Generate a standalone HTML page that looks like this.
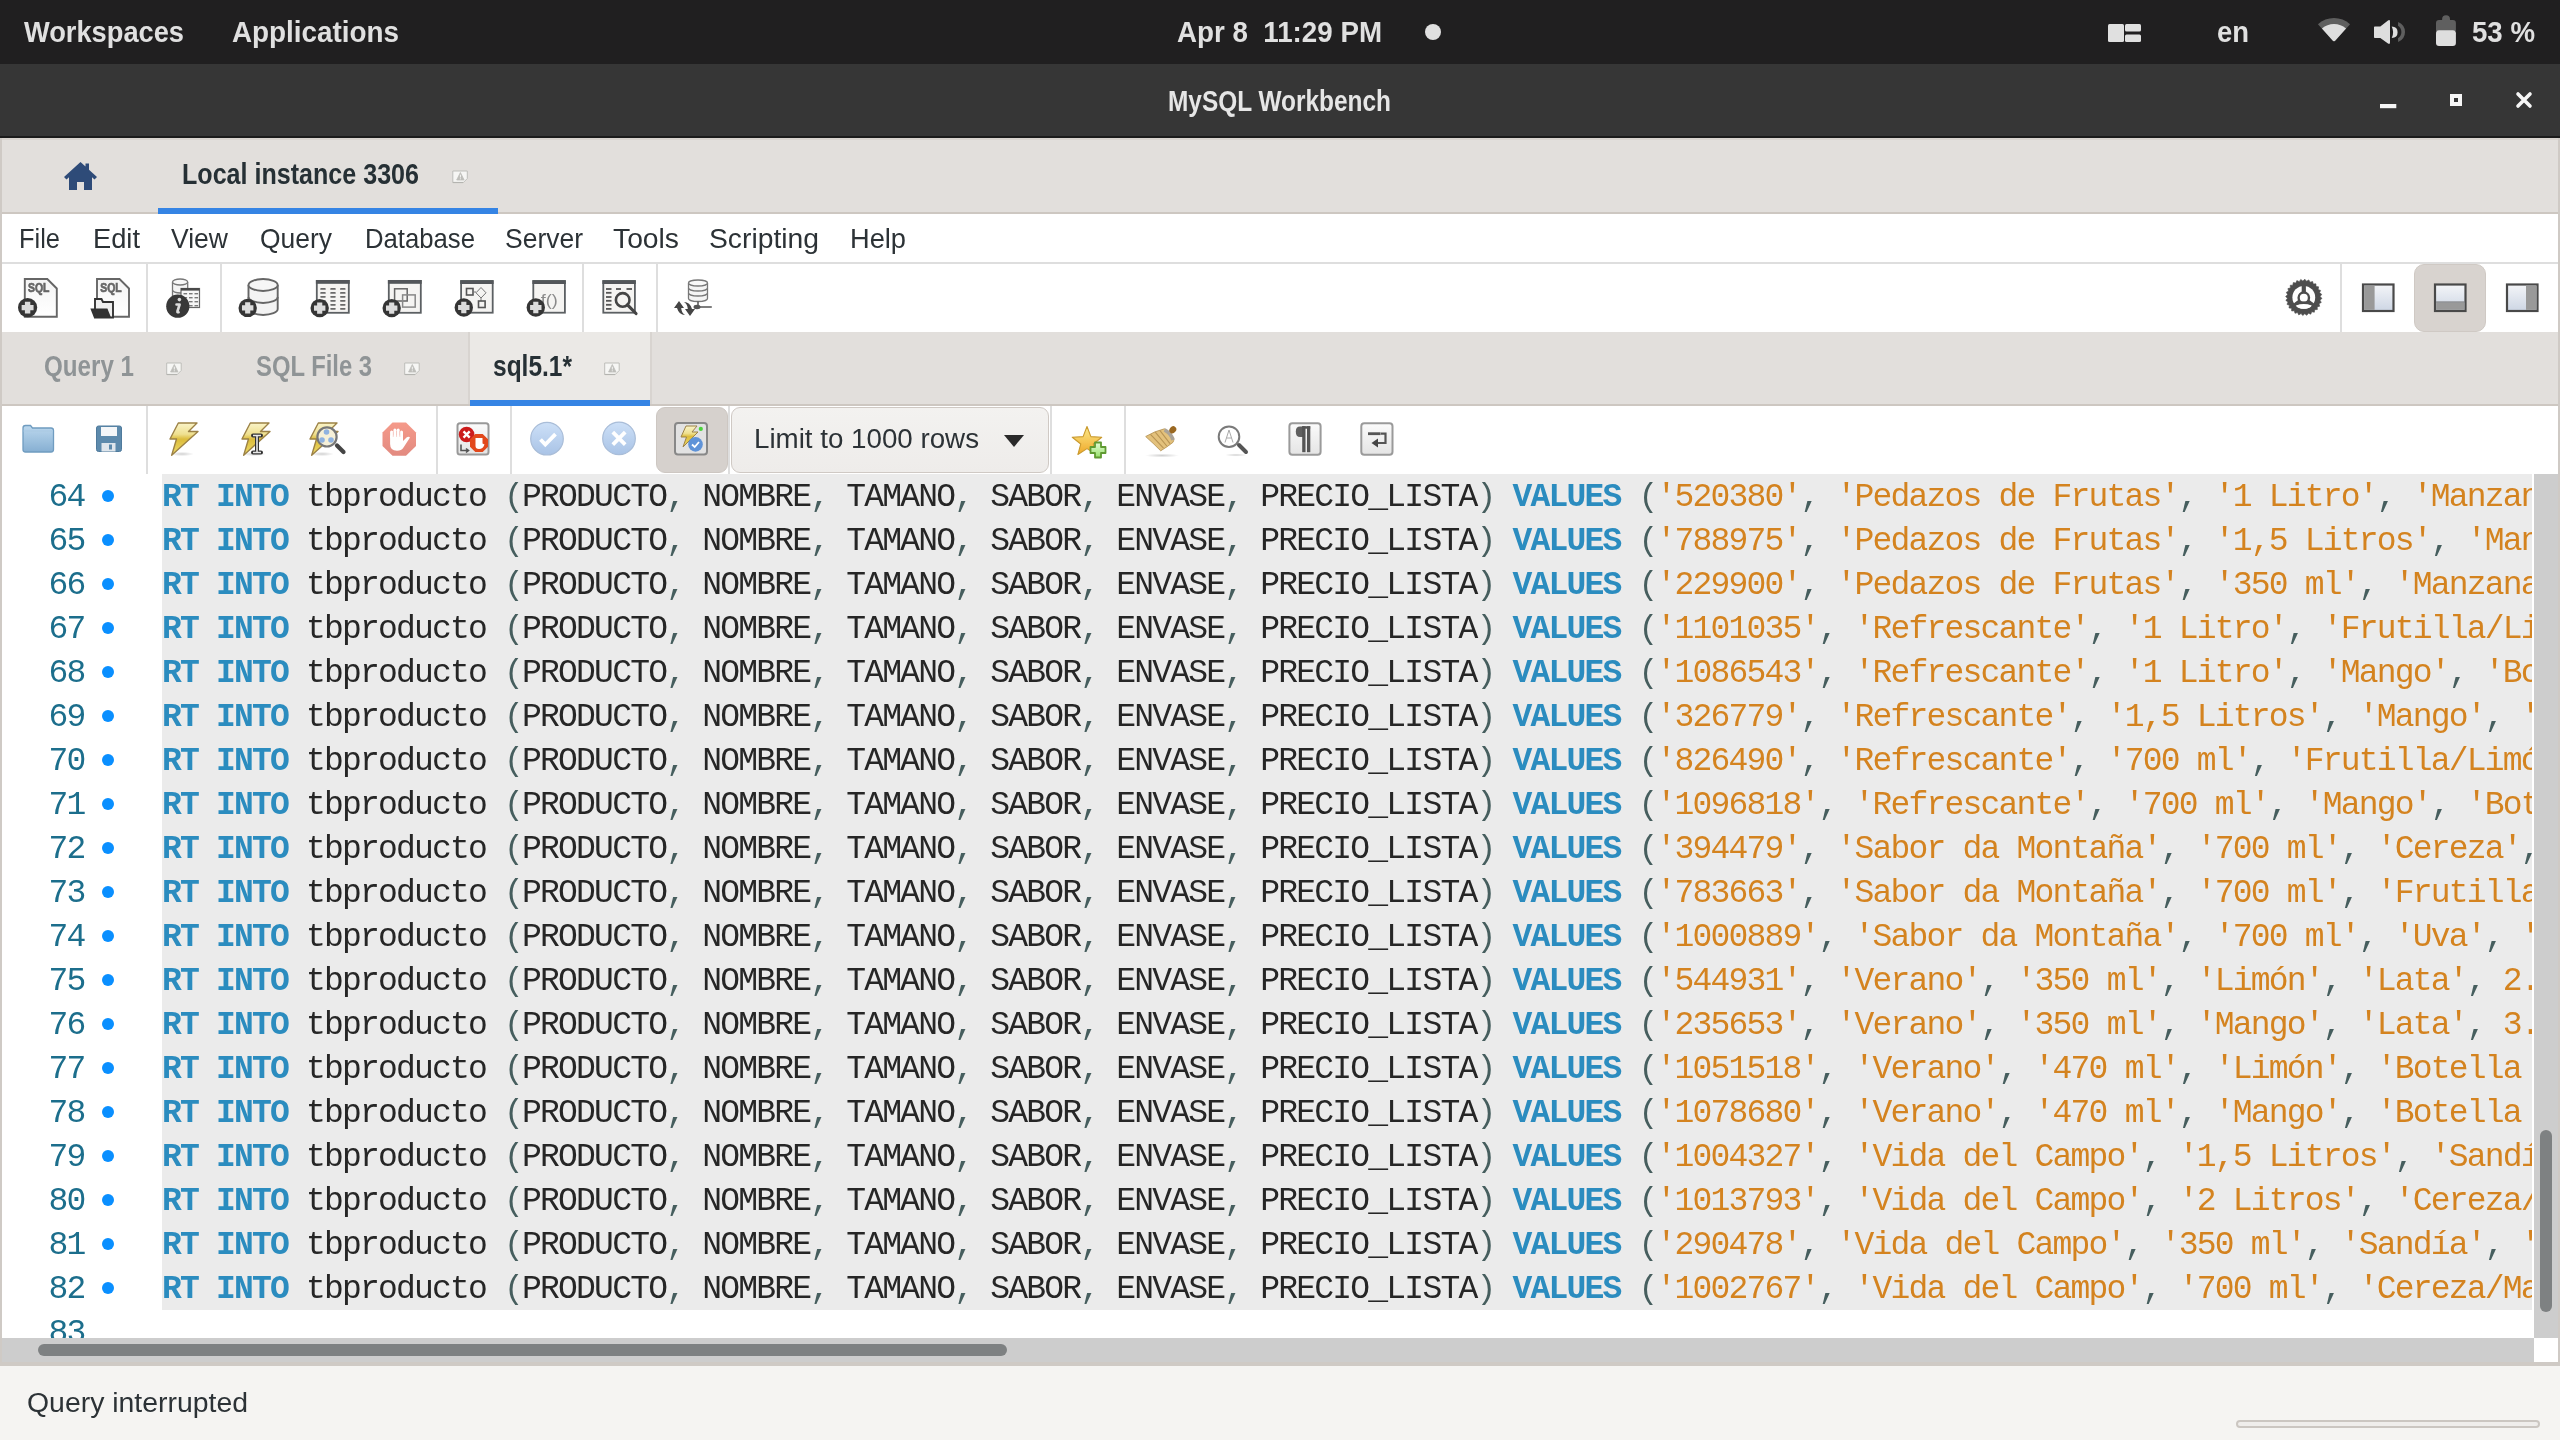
<!DOCTYPE html><html><head><meta charset="utf-8"><style>
*{margin:0;padding:0;box-sizing:border-box}
html,body{width:2560px;height:1440px;overflow:hidden;background:#201f20;font-family:"Liberation Sans",sans-serif}
.a{position:absolute}
#txt{position:absolute;left:0;top:0;width:2560px;height:1440px;pointer-events:none;will-change:transform}
#txt text{font-family:"Liberation Sans",sans-serif}
.code{position:absolute;left:162px;top:474px;width:2370px;height:864px;overflow:hidden}
.ci{position:absolute;left:0;top:2px;width:2370px;height:900px;will-change:transform}
.ln{position:absolute;left:0;height:44px;white-space:pre;font-family:"Liberation Mono",monospace;font-size:33px;letter-spacing:-1.8px;line-height:44px;color:#262626}
.k{color:#2b8cbf;font-weight:bold}
.p{color:#465e5e}
.s{color:#d4831f}
.gut{position:absolute;left:2px;top:474px;width:160px;height:864px;overflow:hidden;background:#fff;will-change:transform}
.num{position:absolute;left:0;margin-top:2px;width:82.5px;text-align:right;white-space:pre;font-family:"Liberation Mono",monospace;font-size:33px;letter-spacing:-1.8px;line-height:44px;color:#1c6e8c}
.dot{position:absolute;left:100px;width:12px;height:12px;border-radius:50%;background:#0a8fff}
.sep{position:absolute;width:2px;background:#dedede}
</style></head><body><div class="a" style="left:0;top:64px;width:2560px;height:72px;background:#363636"></div><div class="a" style="left:0;top:136px;width:2560px;height:2px;background:#1b1b1b"></div><div class="a" style="left:0;top:138px;width:2560px;height:1302px;background:#cfcac5"></div><div class="a" style="left:2px;top:140px;width:2556px;height:72px;background:#e2dfdc"></div><div class="a" style="left:2px;top:138px;width:2556px;height:2px;background:#d9d4cf"></div><div class="a" style="left:2px;top:212px;width:2556px;height:2px;background:#cdc7c1"></div><div class="a" style="left:158px;top:208px;width:340px;height:6px;background:#3584e4"></div><div class="a" style="left:2px;top:214px;width:2556px;height:48px;background:#fff"></div><div class="a" style="left:2px;top:262px;width:2556px;height:2px;background:#dedede"></div><div class="a" style="left:2px;top:264px;width:2556px;height:68px;background:#fff"></div><div class="sep" style="left:146px;top:264px;height:68px"></div><div class="sep" style="left:220px;top:264px;height:68px"></div><div class="sep" style="left:582px;top:264px;height:68px"></div><div class="sep" style="left:656px;top:264px;height:68px"></div><div class="sep" style="left:2340px;top:264px;height:68px"></div><div class="a" style="left:2414px;top:264px;width:72px;height:68px;border-radius:10px;background:#d8d3cf;border:1px solid #cfc9c4"></div><div class="a" style="left:2px;top:332px;width:2556px;height:74px;background:#e2dfdc"></div><div class="a" style="left:2px;top:404px;width:2556px;height:2px;background:#cdc7c1"></div><div class="a" style="left:468px;top:332px;width:2px;height:72px;background:#d8d4d0"></div><div class="a" style="left:470px;top:332px;width:180px;height:74px;background:#ebe9e6"></div><div class="a" style="left:650px;top:332px;width:2px;height:72px;background:#d8d4d0"></div><div class="a" style="left:470px;top:400px;width:180px;height:6px;background:#3584e4"></div><div class="a" style="left:2px;top:406px;width:2556px;height:68px;background:#fff"></div><div class="sep" style="left:146px;top:406px;height:68px"></div><div class="sep" style="left:436px;top:406px;height:68px"></div><div class="sep" style="left:510px;top:406px;height:68px"></div><div class="sep" style="left:728px;top:406px;height:68px"></div><div class="sep" style="left:1050px;top:406px;height:68px"></div><div class="sep" style="left:1124px;top:406px;height:68px"></div><div class="a" style="left:656px;top:407px;width:72px;height:66px;border-radius:9px;background:#d6d1cd;border:1px solid #cdc7c2"></div><div class="a" style="left:731px;top:407px;width:318px;height:66px;border-radius:9px;background:linear-gradient(#f3f2f0,#eeecea);border:1.5px solid #cfc9c4"></div><div class="a" style="left:1004px;top:435px;width:0;height:0;border-left:10px solid transparent;border-right:10px solid transparent;border-top:12px solid #2a2a2a"></div><div class="a" style="left:2px;top:474px;width:2532px;height:864px;background:#fff"></div><div class="a" style="left:162px;top:474px;width:2370px;height:836px;background:#ebebeb"></div><div class="a" style="left:2534px;top:474px;width:24px;height:864px;background:#cdcdcd"></div><div class="a" style="left:2540px;top:1130px;width:12px;height:182px;border-radius:6px;background:#7e8182"></div><div class="a" style="left:2px;top:1338px;width:2532px;height:24px;background:#cdcdcd"></div><div class="a" style="left:38px;top:1344px;width:969px;height:12px;border-radius:6px;background:#7e8182"></div><div class="a" style="left:2534px;top:1338px;width:24px;height:24px;background:#fff"></div><div class="a" style="left:0;top:1366px;width:2560px;height:74px;background:#f5f4f2"></div><div class="a" style="left:2236px;top:1419.5px;width:304px;height:8.5px;border-radius:4.5px;background:#efedeb;border:2px solid #cbc6c1"></div><div class="gut"><div class="num" style="top:0px">64</div><div class="dot" style="top:16px"></div><div class="num" style="top:44px">65</div><div class="dot" style="top:60px"></div><div class="num" style="top:88px">66</div><div class="dot" style="top:104px"></div><div class="num" style="top:132px">67</div><div class="dot" style="top:148px"></div><div class="num" style="top:176px">68</div><div class="dot" style="top:192px"></div><div class="num" style="top:220px">69</div><div class="dot" style="top:236px"></div><div class="num" style="top:264px">70</div><div class="dot" style="top:280px"></div><div class="num" style="top:308px">71</div><div class="dot" style="top:324px"></div><div class="num" style="top:352px">72</div><div class="dot" style="top:368px"></div><div class="num" style="top:396px">73</div><div class="dot" style="top:412px"></div><div class="num" style="top:440px">74</div><div class="dot" style="top:456px"></div><div class="num" style="top:484px">75</div><div class="dot" style="top:500px"></div><div class="num" style="top:528px">76</div><div class="dot" style="top:544px"></div><div class="num" style="top:572px">77</div><div class="dot" style="top:588px"></div><div class="num" style="top:616px">78</div><div class="dot" style="top:632px"></div><div class="num" style="top:660px">79</div><div class="dot" style="top:676px"></div><div class="num" style="top:704px">80</div><div class="dot" style="top:720px"></div><div class="num" style="top:748px">81</div><div class="dot" style="top:764px"></div><div class="num" style="top:792px">82</div><div class="dot" style="top:808px"></div><div class="num" style="top:836px">83</div></div><div class="code"><div class="ci"><div class="ln" style="top:0px"><span class="k">RT</span> <span class="k">INTO</span> tbproducto <span class="p">(</span>PRODUCTO<span class="p">,</span> NOMBRE<span class="p">,</span> TAMANO<span class="p">,</span> SABOR<span class="p">,</span> ENVASE<span class="p">,</span> PRECIO_LISTA<span class="p">)</span> <span class="k">VALUES</span> <span class="p">(</span><span class="s">'520380'</span><span class="p">,</span> <span class="s">'Pedazos de Frutas'</span><span class="p">,</span> <span class="s">'1 Litro'</span><span class="p">,</span> <span class="s">'Manzana'</span><span class="p">,</span> <span class="s">'Botella PET'</span><span class="p">,</span> </div><div class="ln" style="top:44px"><span class="k">RT</span> <span class="k">INTO</span> tbproducto <span class="p">(</span>PRODUCTO<span class="p">,</span> NOMBRE<span class="p">,</span> TAMANO<span class="p">,</span> SABOR<span class="p">,</span> ENVASE<span class="p">,</span> PRECIO_LISTA<span class="p">)</span> <span class="k">VALUES</span> <span class="p">(</span><span class="s">'788975'</span><span class="p">,</span> <span class="s">'Pedazos de Frutas'</span><span class="p">,</span> <span class="s">'1,5 Litros'</span><span class="p">,</span> <span class="s">'Manzana'</span><span class="p">,</span> <span class="s">'Botella PET'</span><span class="p">,</span> </div><div class="ln" style="top:88px"><span class="k">RT</span> <span class="k">INTO</span> tbproducto <span class="p">(</span>PRODUCTO<span class="p">,</span> NOMBRE<span class="p">,</span> TAMANO<span class="p">,</span> SABOR<span class="p">,</span> ENVASE<span class="p">,</span> PRECIO_LISTA<span class="p">)</span> <span class="k">VALUES</span> <span class="p">(</span><span class="s">'229900'</span><span class="p">,</span> <span class="s">'Pedazos de Frutas'</span><span class="p">,</span> <span class="s">'350 ml'</span><span class="p">,</span> <span class="s">'Manzana'</span><span class="p">,</span> <span class="s">'Lata'</span><span class="p">,</span> </div><div class="ln" style="top:132px"><span class="k">RT</span> <span class="k">INTO</span> tbproducto <span class="p">(</span>PRODUCTO<span class="p">,</span> NOMBRE<span class="p">,</span> TAMANO<span class="p">,</span> SABOR<span class="p">,</span> ENVASE<span class="p">,</span> PRECIO_LISTA<span class="p">)</span> <span class="k">VALUES</span> <span class="p">(</span><span class="s">'1101035'</span><span class="p">,</span> <span class="s">'Refrescante'</span><span class="p">,</span> <span class="s">'1 Litro'</span><span class="p">,</span> <span class="s">'Frutilla/Limón'</span><span class="p">,</span> <span class="s">'Botella PET'</span><span class="p">,</span> </div><div class="ln" style="top:176px"><span class="k">RT</span> <span class="k">INTO</span> tbproducto <span class="p">(</span>PRODUCTO<span class="p">,</span> NOMBRE<span class="p">,</span> TAMANO<span class="p">,</span> SABOR<span class="p">,</span> ENVASE<span class="p">,</span> PRECIO_LISTA<span class="p">)</span> <span class="k">VALUES</span> <span class="p">(</span><span class="s">'1086543'</span><span class="p">,</span> <span class="s">'Refrescante'</span><span class="p">,</span> <span class="s">'1 Litro'</span><span class="p">,</span> <span class="s">'Mango'</span><span class="p">,</span> <span class="s">'Botella PET'</span><span class="p">,</span> </div><div class="ln" style="top:220px"><span class="k">RT</span> <span class="k">INTO</span> tbproducto <span class="p">(</span>PRODUCTO<span class="p">,</span> NOMBRE<span class="p">,</span> TAMANO<span class="p">,</span> SABOR<span class="p">,</span> ENVASE<span class="p">,</span> PRECIO_LISTA<span class="p">)</span> <span class="k">VALUES</span> <span class="p">(</span><span class="s">'326779'</span><span class="p">,</span> <span class="s">'Refrescante'</span><span class="p">,</span> <span class="s">'1,5 Litros'</span><span class="p">,</span> <span class="s">'Mango'</span><span class="p">,</span> <span class="s">'Botella PET'</span><span class="p">,</span> </div><div class="ln" style="top:264px"><span class="k">RT</span> <span class="k">INTO</span> tbproducto <span class="p">(</span>PRODUCTO<span class="p">,</span> NOMBRE<span class="p">,</span> TAMANO<span class="p">,</span> SABOR<span class="p">,</span> ENVASE<span class="p">,</span> PRECIO_LISTA<span class="p">)</span> <span class="k">VALUES</span> <span class="p">(</span><span class="s">'826490'</span><span class="p">,</span> <span class="s">'Refrescante'</span><span class="p">,</span> <span class="s">'700 ml'</span><span class="p">,</span> <span class="s">'Frutilla/Limón'</span><span class="p">,</span> <span class="s">'Botella de vidrio'</span><span class="p">,</span> </div><div class="ln" style="top:308px"><span class="k">RT</span> <span class="k">INTO</span> tbproducto <span class="p">(</span>PRODUCTO<span class="p">,</span> NOMBRE<span class="p">,</span> TAMANO<span class="p">,</span> SABOR<span class="p">,</span> ENVASE<span class="p">,</span> PRECIO_LISTA<span class="p">)</span> <span class="k">VALUES</span> <span class="p">(</span><span class="s">'1096818'</span><span class="p">,</span> <span class="s">'Refrescante'</span><span class="p">,</span> <span class="s">'700 ml'</span><span class="p">,</span> <span class="s">'Mango'</span><span class="p">,</span> <span class="s">'Botella de vidrio'</span><span class="p">,</span> </div><div class="ln" style="top:352px"><span class="k">RT</span> <span class="k">INTO</span> tbproducto <span class="p">(</span>PRODUCTO<span class="p">,</span> NOMBRE<span class="p">,</span> TAMANO<span class="p">,</span> SABOR<span class="p">,</span> ENVASE<span class="p">,</span> PRECIO_LISTA<span class="p">)</span> <span class="k">VALUES</span> <span class="p">(</span><span class="s">'394479'</span><span class="p">,</span> <span class="s">'Sabor da Montaña'</span><span class="p">,</span> <span class="s">'700 ml'</span><span class="p">,</span> <span class="s">'Cereza'</span><span class="p">,</span> <span class="s">'Botella de vidrio'</span><span class="p">,</span> </div><div class="ln" style="top:396px"><span class="k">RT</span> <span class="k">INTO</span> tbproducto <span class="p">(</span>PRODUCTO<span class="p">,</span> NOMBRE<span class="p">,</span> TAMANO<span class="p">,</span> SABOR<span class="p">,</span> ENVASE<span class="p">,</span> PRECIO_LISTA<span class="p">)</span> <span class="k">VALUES</span> <span class="p">(</span><span class="s">'783663'</span><span class="p">,</span> <span class="s">'Sabor da Montaña'</span><span class="p">,</span> <span class="s">'700 ml'</span><span class="p">,</span> <span class="s">'Frutilla/Limón'</span><span class="p">,</span> <span class="s">'Botella de vidrio'</span><span class="p">,</span> </div><div class="ln" style="top:440px"><span class="k">RT</span> <span class="k">INTO</span> tbproducto <span class="p">(</span>PRODUCTO<span class="p">,</span> NOMBRE<span class="p">,</span> TAMANO<span class="p">,</span> SABOR<span class="p">,</span> ENVASE<span class="p">,</span> PRECIO_LISTA<span class="p">)</span> <span class="k">VALUES</span> <span class="p">(</span><span class="s">'1000889'</span><span class="p">,</span> <span class="s">'Sabor da Montaña'</span><span class="p">,</span> <span class="s">'700 ml'</span><span class="p">,</span> <span class="s">'Uva'</span><span class="p">,</span> <span class="s">'Botella de vidrio'</span><span class="p">,</span> </div><div class="ln" style="top:484px"><span class="k">RT</span> <span class="k">INTO</span> tbproducto <span class="p">(</span>PRODUCTO<span class="p">,</span> NOMBRE<span class="p">,</span> TAMANO<span class="p">,</span> SABOR<span class="p">,</span> ENVASE<span class="p">,</span> PRECIO_LISTA<span class="p">)</span> <span class="k">VALUES</span> <span class="p">(</span><span class="s">'544931'</span><span class="p">,</span> <span class="s">'Verano'</span><span class="p">,</span> <span class="s">'350 ml'</span><span class="p">,</span> <span class="s">'Limón'</span><span class="p">,</span> <span class="s">'Lata'</span><span class="p">,</span> <span class="s">2.4</span><span class="p">,</span> </div><div class="ln" style="top:528px"><span class="k">RT</span> <span class="k">INTO</span> tbproducto <span class="p">(</span>PRODUCTO<span class="p">,</span> NOMBRE<span class="p">,</span> TAMANO<span class="p">,</span> SABOR<span class="p">,</span> ENVASE<span class="p">,</span> PRECIO_LISTA<span class="p">)</span> <span class="k">VALUES</span> <span class="p">(</span><span class="s">'235653'</span><span class="p">,</span> <span class="s">'Verano'</span><span class="p">,</span> <span class="s">'350 ml'</span><span class="p">,</span> <span class="s">'Mango'</span><span class="p">,</span> <span class="s">'Lata'</span><span class="p">,</span> <span class="s">3.8</span><span class="p">,</span> </div><div class="ln" style="top:572px"><span class="k">RT</span> <span class="k">INTO</span> tbproducto <span class="p">(</span>PRODUCTO<span class="p">,</span> NOMBRE<span class="p">,</span> TAMANO<span class="p">,</span> SABOR<span class="p">,</span> ENVASE<span class="p">,</span> PRECIO_LISTA<span class="p">)</span> <span class="k">VALUES</span> <span class="p">(</span><span class="s">'1051518'</span><span class="p">,</span> <span class="s">'Verano'</span><span class="p">,</span> <span class="s">'470 ml'</span><span class="p">,</span> <span class="s">'Limón'</span><span class="p">,</span> <span class="s">'Botella de vidrio'</span><span class="p">,</span> </div><div class="ln" style="top:616px"><span class="k">RT</span> <span class="k">INTO</span> tbproducto <span class="p">(</span>PRODUCTO<span class="p">,</span> NOMBRE<span class="p">,</span> TAMANO<span class="p">,</span> SABOR<span class="p">,</span> ENVASE<span class="p">,</span> PRECIO_LISTA<span class="p">)</span> <span class="k">VALUES</span> <span class="p">(</span><span class="s">'1078680'</span><span class="p">,</span> <span class="s">'Verano'</span><span class="p">,</span> <span class="s">'470 ml'</span><span class="p">,</span> <span class="s">'Mango'</span><span class="p">,</span> <span class="s">'Botella de vidrio'</span><span class="p">,</span> </div><div class="ln" style="top:660px"><span class="k">RT</span> <span class="k">INTO</span> tbproducto <span class="p">(</span>PRODUCTO<span class="p">,</span> NOMBRE<span class="p">,</span> TAMANO<span class="p">,</span> SABOR<span class="p">,</span> ENVASE<span class="p">,</span> PRECIO_LISTA<span class="p">)</span> <span class="k">VALUES</span> <span class="p">(</span><span class="s">'1004327'</span><span class="p">,</span> <span class="s">'Vida del Campo'</span><span class="p">,</span> <span class="s">'1,5 Litros'</span><span class="p">,</span> <span class="s">'Sandía'</span><span class="p">,</span> <span class="s">'Botella PET'</span><span class="p">,</span> </div><div class="ln" style="top:704px"><span class="k">RT</span> <span class="k">INTO</span> tbproducto <span class="p">(</span>PRODUCTO<span class="p">,</span> NOMBRE<span class="p">,</span> TAMANO<span class="p">,</span> SABOR<span class="p">,</span> ENVASE<span class="p">,</span> PRECIO_LISTA<span class="p">)</span> <span class="k">VALUES</span> <span class="p">(</span><span class="s">'1013793'</span><span class="p">,</span> <span class="s">'Vida del Campo'</span><span class="p">,</span> <span class="s">'2 Litros'</span><span class="p">,</span> <span class="s">'Cereza/Manzana'</span><span class="p">,</span> <span class="s">'Botella PET'</span><span class="p">,</span> </div><div class="ln" style="top:748px"><span class="k">RT</span> <span class="k">INTO</span> tbproducto <span class="p">(</span>PRODUCTO<span class="p">,</span> NOMBRE<span class="p">,</span> TAMANO<span class="p">,</span> SABOR<span class="p">,</span> ENVASE<span class="p">,</span> PRECIO_LISTA<span class="p">)</span> <span class="k">VALUES</span> <span class="p">(</span><span class="s">'290478'</span><span class="p">,</span> <span class="s">'Vida del Campo'</span><span class="p">,</span> <span class="s">'350 ml'</span><span class="p">,</span> <span class="s">'Sandía'</span><span class="p">,</span> <span class="s">'Lata'</span><span class="p">,</span> </div><div class="ln" style="top:792px"><span class="k">RT</span> <span class="k">INTO</span> tbproducto <span class="p">(</span>PRODUCTO<span class="p">,</span> NOMBRE<span class="p">,</span> TAMANO<span class="p">,</span> SABOR<span class="p">,</span> ENVASE<span class="p">,</span> PRECIO_LISTA<span class="p">)</span> <span class="k">VALUES</span> <span class="p">(</span><span class="s">'1002767'</span><span class="p">,</span> <span class="s">'Vida del Campo'</span><span class="p">,</span> <span class="s">'700 ml'</span><span class="p">,</span> <span class="s">'Cereza/Manzana'</span><span class="p">,</span> <span class="s">'Botella PET'</span><span class="p">,</span> </div></div></div><svg id="txt" width="2560" height="1440"><circle cx="1433" cy="32" r="8" fill="#e0e0e0"/><rect x="2108" y="24" width="16" height="18" rx="1.5" fill="#e0e0e0"/><rect x="2125" y="24" width="16" height="7.5" rx="1.5" fill="#e0e0e0"/><rect x="2125" y="34.5" width="16" height="7.5" rx="1.5" fill="#e0e0e0"/><defs>
<linearGradient id="gdoc" x1="0" y1="0" x2="0" y2="1"><stop offset="0" stop-color="#f4f4f4"/><stop offset="1" stop-color="#ffffff"/></linearGradient>
<linearGradient id="gbolt" x1="0" y1="0" x2="0" y2="1"><stop offset="0" stop-color="#faf4c8"/><stop offset="0.35" stop-color="#efe090"/><stop offset="0.5" stop-color="#dcbc3c"/><stop offset="1" stop-color="#eedc6a"/></linearGradient>
<linearGradient id="gblue" x1="0" y1="0" x2="0" y2="1"><stop offset="0" stop-color="#cde0f7"/><stop offset="1" stop-color="#a9c3e6"/></linearGradient>
<linearGradient id="gfold" x1="0" y1="0" x2="0" y2="1"><stop offset="0" stop-color="#bcd8ee"/><stop offset="1" stop-color="#86afd2"/></linearGradient>
<linearGradient id="gbox" x1="0" y1="0" x2="0" y2="1"><stop offset="0" stop-color="#fbfbfb"/><stop offset="1" stop-color="#e4e4e4"/></linearGradient>
<linearGradient id="gstar" x1="0" y1="0" x2="0" y2="1"><stop offset="0" stop-color="#fbe98a"/><stop offset="1" stop-color="#f0a828"/></linearGradient>
<linearGradient id="ggreen" x1="0" y1="0" x2="0" y2="1"><stop offset="0" stop-color="#e4fcd8"/><stop offset="1" stop-color="#96e06a"/></linearGradient>
<linearGradient id="glay" x1="0" y1="0" x2="0" y2="1"><stop offset="0" stop-color="#f4f5f8"/><stop offset="1" stop-color="#cdd6e4"/></linearGradient>
<linearGradient id="gstop" x1="0" y1="0" x2="0" y2="1"><stop offset="0" stop-color="#f59a8a"/><stop offset="1" stop-color="#e28a80"/></linearGradient>
<filter id="soft" x="-5%" y="-5%" width="110%" height="110%"><feGaussianBlur stdDeviation="0.45"/></filter>
<radialGradient id="gshadow"><stop offset="0" stop-color="#000" stop-opacity="0.18"/><stop offset="1" stop-color="#000" stop-opacity="0"/></radialGradient>
</defs><path d="M2334 42 L2317.94 24.16 A24 24 0 0 1 2350.06 24.16 Z" fill="#5f5f5f"/><path d="M2335.6 40.2 Q2334 42 2332.4 40.2 L2321.96 28.62 A18 18 0 0 1 2346.04 28.62 Z" fill="#dedede"/><path d="M2374.8 26.4 H2380.3 L2388 20.4 Q2390 19.4 2390 21.5 V42.5 Q2390 44.6 2388 43.6 L2380.3 38.1 H2374.8 Q2374 38.1 2374 37.3 V27.2 Q2374 26.4 2374.8 26.4 Z" fill="#dedede"/><path d="M2391.7 26.4 Q2397.6 26.6 2397.6 32.2 Q2397.6 37.8 2391.7 38 Q2394.6 32.2 2391.7 26.4 Z" fill="#dedede"/><path d="M2398.2 22 Q2405 25 2405 32 Q2405 39 2398.2 42 L2398 38.2 Q2401.4 35.8 2401.4 32 Q2401.4 28.2 2398 25.8 Z" fill="#5f5f5f"/><path d="M2442.1 20 V19.2 A3.95 3.95 0 0 1 2450 19.2 V20 H2452.9 Q2455.9 20 2455.9 23 V31 H2436 V23 Q2436 20 2439 20 Z" fill="#5f5f5f"/><rect x="2436" y="30.2" width="19.9" height="15.8" rx="3" fill="#dedede"/><rect x="2380" y="104" width="16.3" height="4.2" fill="#f6f6f6"/><rect x="2452" y="96" width="8" height="8" fill="none" stroke="#f6f6f6" stroke-width="4"/><path d="M2518 94 L2530 106 M2530 94 L2518 106" stroke="#f6f6f6" stroke-width="3.6" stroke-linecap="round"/><g filter="url(#soft)"><path d="M80.5 162 L64 177 L66.5 179.5 L69 177.3 V190 H77 V182 H84 V190 H92 V177.3 L94.5 179.5 L97 177 L89 169.8 V163.5 H85.5 V166.5 Z" fill="#2f4b78"/><path d="M452.8 171.0H467.3 V178.5 L463.3 182.5 H452.8 Z" fill="#f6f6f4" stroke="#bdbdb9" stroke-width="1"/><path d="M452.8 182.5H463.3" stroke="#b4b4b0" stroke-width="1.2"/><path d="M460.40000000000003 172.5L464.1 180.0H456.7Z" fill="#bebeba" stroke="#bebeba" stroke-width="0.8" stroke-linejoin="round"/><path d="M460.40000000000003 174.7v2.8M460.40000000000003 178.3v1" stroke="#f6f6f4" stroke-width="1"/><path d="M166.7 363.0H181.2 V370.5 L177.2 374.5 H166.7 Z" fill="#f6f6f4" stroke="#bdbdb9" stroke-width="1"/><path d="M166.7 374.5H177.2" stroke="#b4b4b0" stroke-width="1.2"/><path d="M174.29999999999998 364.5L178.0 372.0H170.6Z" fill="#bebeba" stroke="#bebeba" stroke-width="0.8" stroke-linejoin="round"/><path d="M174.29999999999998 366.7v2.8M174.29999999999998 370.3v1" stroke="#f6f6f4" stroke-width="1"/><path d="M404.7 363.0H419.2 V370.5 L415.2 374.5 H404.7 Z" fill="#f6f6f4" stroke="#bdbdb9" stroke-width="1"/><path d="M404.7 374.5H415.2" stroke="#b4b4b0" stroke-width="1.2"/><path d="M412.3 364.5L416.0 372.0H408.59999999999997Z" fill="#bebeba" stroke="#bebeba" stroke-width="0.8" stroke-linejoin="round"/><path d="M412.3 366.7v2.8M412.3 370.3v1" stroke="#f6f6f4" stroke-width="1"/><path d="M604.7 363.0H619.2 V370.5 L615.2 374.5 H604.7 Z" fill="#f6f6f4" stroke="#bdbdb9" stroke-width="1"/><path d="M604.7 374.5H615.2" stroke="#b4b4b0" stroke-width="1.2"/><path d="M612.3000000000001 364.5L616.0 372.0H608.6Z" fill="#bebeba" stroke="#bebeba" stroke-width="0.8" stroke-linejoin="round"/><path d="M612.3000000000001 366.7v2.8M612.3000000000001 370.3v1" stroke="#f6f6f4" stroke-width="1"/><path d="M24.8 279 H47.3 L56.8 288.5 V316.8 H24.8 Z" fill="url(#gdoc)" stroke="#666" stroke-width="1.9"/><text x="28.0" y="291.7" font-size="13.6" font-weight="bold" fill="#666" stroke="#666" stroke-width="0.7" textLength="21.5" lengthAdjust="spacingAndGlyphs">SQL</text><circle cx="27.6" cy="307.6" r="9.6" fill="#363636"/><path d="M21.648000000000003 307.6H33.552M27.6 301.648V313.552" stroke="#dcdcdc" stroke-width="5.376"/><path d="M97 279 H119.5 L129 288.5 V316.8 H97 Z" fill="url(#gdoc)" stroke="#666" stroke-width="1.9"/><text x="100.2" y="291.7" font-size="13.6" font-weight="bold" fill="#666" stroke="#666" stroke-width="0.7" textLength="21.5" lengthAdjust="spacingAndGlyphs">SQL</text><path d="M95 317.5 V299 H101.5 L103 302 H113 V317.5 Z" fill="#efefef" stroke="#333" stroke-width="1.9"/><path d="M90.4 308.4 H107.4 L111 317.6 H93.8 Z" fill="#333"/><path d="M172.5 282 V298 A7.6 3 0 0 0 187.7 298 V282" fill="#f4f4f4" stroke="#777" stroke-width="1.3"/><ellipse cx="180.1" cy="282" rx="7.6" ry="3" fill="#f8f8f8" stroke="#777" stroke-width="1.3"/><path d="M172.5 290 A7.6 3 0 0 0 187.7 290" fill="none" stroke="#777" stroke-width="1.3"/><rect x="181" y="288.5" width="18.5" height="19" fill="#f7f7f7" stroke="#666" stroke-width="1.2"/><rect x="181" y="288" width="18.5" height="2.6" fill="#4a4a4a"/><rect x="183.5" y="293" width="3.6" height="1.4" fill="#7a7a7a"/><rect x="189" y="293" width="3.6" height="1.4" fill="#7a7a7a"/><rect x="194.5" y="293" width="3.6" height="1.4" fill="#7a7a7a"/><rect x="183.5" y="297" width="3.6" height="1.4" fill="#7a7a7a"/><rect x="189" y="297" width="3.6" height="1.4" fill="#7a7a7a"/><rect x="194.5" y="297" width="3.6" height="1.4" fill="#7a7a7a"/><rect x="183.5" y="301" width="3.6" height="1.4" fill="#7a7a7a"/><rect x="189" y="301" width="3.6" height="1.4" fill="#7a7a7a"/><rect x="194.5" y="301" width="3.6" height="1.4" fill="#7a7a7a"/><rect x="183.5" y="305" width="3.6" height="1.4" fill="#7a7a7a"/><rect x="189" y="305" width="3.6" height="1.4" fill="#7a7a7a"/><rect x="194.5" y="305" width="3.6" height="1.4" fill="#7a7a7a"/><circle cx="177.8" cy="306.2" r="11.6" fill="#383838"/><path d="M176.5 304.5 H179.6 L177.4 311.5 Q177 312.6 178.6 312.2" fill="none" stroke="#dcdcdc" stroke-width="2.6" stroke-linejoin="round" stroke-linecap="round"/><circle cx="179.4" cy="299.6" r="1.8" fill="#dcdcdc"/><path d="M248.5 285 V309 A14.6 6 0 0 0 277.7 309 V285" fill="#f3f3f3" stroke="#666" stroke-width="1.9"/><ellipse cx="263.1" cy="285" rx="14.6" ry="6" fill="#f6f6f6" stroke="#666" stroke-width="1.9"/><path d="M248.5 297 A14.6 6 0 0 0 277.7 297" fill="none" stroke="#666" stroke-width="1.9"/><circle cx="247.7" cy="307.9" r="9.2" fill="#363636"/><path d="M241.99599999999998 307.9H253.404M247.7 302.19599999999997V313.604" stroke="#dcdcdc" stroke-width="5.152"/><rect x="316.79999999999995" y="280.9" width="32.000000000000014" height="31.899999999999988" fill="#f5f4f2" stroke="#5c6063" stroke-width="1.8"/><rect x="315.9" y="280" width="33.80000000000001" height="3.8" fill="#53575a"/><rect x="320.2" y="288.0" width="5.6" height="1.8" rx="0.9" fill="#6a6a6a"/><rect x="330.2" y="288.0" width="5.6" height="1.8" rx="0.9" fill="#6a6a6a"/><rect x="340" y="288.0" width="5.6" height="1.8" rx="0.9" fill="#6a6a6a"/><rect x="320.2" y="292.0" width="5.6" height="1.8" rx="0.9" fill="#6a6a6a"/><rect x="330.2" y="292.0" width="5.6" height="1.8" rx="0.9" fill="#6a6a6a"/><rect x="340" y="292.0" width="5.6" height="1.8" rx="0.9" fill="#6a6a6a"/><rect x="320.2" y="295.90000000000003" width="5.6" height="1.8" rx="0.9" fill="#6a6a6a"/><rect x="330.2" y="295.90000000000003" width="5.6" height="1.8" rx="0.9" fill="#6a6a6a"/><rect x="340" y="295.90000000000003" width="5.6" height="1.8" rx="0.9" fill="#6a6a6a"/><rect x="320.2" y="299.90000000000003" width="5.6" height="1.8" rx="0.9" fill="#6a6a6a"/><rect x="330.2" y="299.90000000000003" width="5.6" height="1.8" rx="0.9" fill="#6a6a6a"/><rect x="340" y="299.90000000000003" width="5.6" height="1.8" rx="0.9" fill="#6a6a6a"/><rect x="320.2" y="303.90000000000003" width="5.6" height="1.8" rx="0.9" fill="#6a6a6a"/><rect x="330.2" y="303.90000000000003" width="5.6" height="1.8" rx="0.9" fill="#6a6a6a"/><rect x="340" y="303.90000000000003" width="5.6" height="1.8" rx="0.9" fill="#6a6a6a"/><rect x="320.2" y="307.90000000000003" width="5.6" height="1.8" rx="0.9" fill="#6a6a6a"/><rect x="330.2" y="307.90000000000003" width="5.6" height="1.8" rx="0.9" fill="#6a6a6a"/><rect x="340" y="307.90000000000003" width="5.6" height="1.8" rx="0.9" fill="#6a6a6a"/><circle cx="319.7" cy="308.1" r="9.2" fill="#363636"/><path d="M313.996 308.1H325.404M319.7 302.396V313.80400000000003" stroke="#dcdcdc" stroke-width="5.152"/><rect x="388.79999999999995" y="280.9" width="32.000000000000014" height="31.899999999999988" fill="#f5f4f2" stroke="#5c6063" stroke-width="1.8"/><rect x="387.9" y="280" width="33.80000000000001" height="3.8" fill="#53575a"/><rect x="394.6" y="288.8" width="12.6" height="12.2" fill="none" stroke="#666" stroke-width="1.5"/><rect x="402.6" y="294.9" width="12.6" height="12.2" fill="none" stroke="#888" stroke-width="1.5"/><circle cx="391.7" cy="308.1" r="9.2" fill="#363636"/><path d="M385.996 308.1H397.404M391.7 302.396V313.80400000000003" stroke="#dcdcdc" stroke-width="5.152"/><rect x="461.09999999999997" y="281.09999999999997" width="31.600000000000033" height="31.600000000000033" fill="#f5f4f2" stroke="#5c6063" stroke-width="1.8"/><rect x="460.2" y="280.2" width="33.400000000000034" height="3.8" fill="#53575a"/><rect x="466.5" y="288.5" width="6.5" height="6.5" fill="none" stroke="#555" stroke-width="1.6"/><path d="M481 287.5 L486 292.8 L481 298 L476 292.8 Z" fill="none" stroke="#777" stroke-width="1"/><path d="M473 292 H476 M481 298 V301" stroke="#777" stroke-width="1"/><rect x="478.5" y="301" width="6.6" height="6.5" fill="none" stroke="#555" stroke-width="1.6"/><circle cx="463.8" cy="307.5" r="9.2" fill="#363636"/><path d="M458.096 307.5H469.504M463.8 301.796V313.204" stroke="#dcdcdc" stroke-width="5.152"/><rect x="533.3" y="281.09999999999997" width="31.599999999999977" height="31.600000000000033" fill="#f5f4f2" stroke="#5c6063" stroke-width="1.8"/><rect x="532.4" y="280.2" width="33.39999999999998" height="3.8" fill="#53575a"/><text x="540.8" y="305.5" font-size="17" fill="#8a8a8a" textLength="17" lengthAdjust="spacingAndGlyphs">f()</text><circle cx="535.8" cy="307.5" r="9.2" fill="#363636"/><path d="M530.096 307.5H541.5039999999999M535.8 301.796V313.204" stroke="#dcdcdc" stroke-width="5.152"/><rect x="603.3" y="281.09999999999997" width="31.599999999999977" height="31.600000000000033" fill="#f5f4f2" stroke="#5c6063" stroke-width="1.8"/><rect x="602.4" y="280.2" width="33.39999999999998" height="3.8" fill="#53575a"/><rect x="606" y="288.1" width="5.5" height="1.8" fill="#555"/><rect x="606" y="291.90000000000003" width="5.5" height="1.8" fill="#555"/><rect x="606" y="296.1" width="5.5" height="1.8" fill="#555"/><rect x="606" y="299.90000000000003" width="5.5" height="1.8" fill="#555"/><rect x="606" y="303.90000000000003" width="5.5" height="1.8" fill="#555"/><rect x="606" y="308.0" width="5.5" height="1.8" fill="#555"/><rect x="616" y="288.1" width="5" height="1.8" fill="#555"/><rect x="626.5" y="288.1" width="5.5" height="1.8" fill="#555"/><circle cx="622.7" cy="299.9" r="6.8" fill="#f5f4f2" stroke="#444" stroke-width="2.6"/><path d="M627.5 304.8 L636 313.5" stroke="#444" stroke-width="3.2" stroke-linecap="round"/><path d="M688.5 283 V298.5 A9.5 3 0 0 0 707.5 298.5 V283" fill="#f4f4f4" stroke="#777" stroke-width="1.3"/><ellipse cx="698" cy="283" rx="9.5" ry="3" fill="#f8f8f8" stroke="#777" stroke-width="1.3"/><path d="M688.5 288 A9.5 3 0 0 0 707.5 288 M688.5 293 A9.5 3 0 0 0 707.5 293" fill="none" stroke="#777" stroke-width="1.3"/><path d="M698 301.5 V305 M694 307 H711.8" stroke="#555" stroke-width="1.5"/><ellipse cx="697" cy="307" rx="3.5" ry="2.2" fill="#555"/><path d="M674 308 L679 301 L684 308 H681.2 Q681.5 313 685 315 Q679 315 677 308 Z" fill="#444"/><path d="M695 309 L690 316 L685 309 H687.8 Q687.5 304 684 302 Q690 302 692 309 Z" fill="#444"/><polygon points="2321.97,298.42 2319.97,300.15 2321.29,302.44 2318.95,303.68 2319.73,306.20 2317.18,306.89 2317.37,309.53 2314.73,309.63 2314.33,312.24 2311.73,311.75 2310.76,314.21 2308.34,313.16 2306.85,315.34 2304.72,313.77 2302.78,315.57 2301.05,313.57 2298.76,314.89 2297.52,312.55 2295.00,313.33 2294.31,310.78 2291.67,310.97 2291.57,308.33 2288.96,307.93 2289.45,305.33 2286.99,304.36 2288.04,301.94 2285.86,300.45 2287.43,298.32 2285.63,296.38 2287.63,294.65 2286.31,292.36 2288.65,291.12 2287.87,288.60 2290.42,287.91 2290.23,285.27 2292.87,285.17 2293.27,282.56 2295.87,283.05 2296.84,280.59 2299.26,281.64 2300.75,279.46 2302.88,281.03 2304.82,279.23 2306.55,281.23 2308.84,279.91 2310.08,282.25 2312.60,281.47 2313.29,284.02 2315.93,283.83 2316.03,286.47 2318.64,286.87 2318.15,289.47 2320.61,290.44 2319.56,292.86 2321.74,294.35 2320.17,296.48" fill="#4e4e4e" stroke="#4e4e4e" stroke-width="0.6" stroke-linejoin="round"/><circle cx="2303.8" cy="297.4" r="11.4" fill="#fff"/><path d="M2303.8 285.4 V292.4" stroke="#4e4e4e" stroke-width="4.2"/><path d="M2299.8 301.4 L2293.8 305.9 M2307.8 301.4 L2313.8 305.9" stroke="#4e4e4e" stroke-width="4"/><circle cx="2303.8" cy="297.7" r="5.2" fill="#fff" stroke="#4e4e4e" stroke-width="2.4"/><path d="M2295.8 305.0 Q2303.8 302.59999999999997 2311.8 305.0 Q2310.8 308.79999999999995 2303.8 308.79999999999995 Q2296.8 308.79999999999995 2295.8 305.0 Z" fill="#fff"/><path d="M2295.3 304.2 Q2303.8 301.4 2312.3 304.2" fill="none" stroke="#4e4e4e" stroke-width="2.6"/><rect x="2363" y="284.5" width="30.5" height="26.5" fill="url(#glay)" stroke="#4a4a4a" stroke-width="2.2"/><rect x="2364.1" y="285.6" width="10.5" height="24.3" fill="#999"/><rect x="2435" y="284.5" width="30.5" height="26.5" fill="url(#glay)" stroke="#4a4a4a" stroke-width="2.2"/><rect x="2436.1" y="302.5" width="28.3" height="7.4" fill="#999"/><path d="M2436.1 302 H2464.4" stroke="#6d6d6d" stroke-width="1"/><rect x="2507" y="284.5" width="30.5" height="26.5" fill="url(#glay)" stroke="#4a4a4a" stroke-width="2.2"/><rect x="2526" y="285.6" width="10.5" height="24.3" fill="#999"/><path d="M23 428 Q23 425.5 25.5 425.5 H30.5 L32.5 428 H51 Q53.5 428 53.5 430.5 V449.5 Q53.5 452 51 452 H25.5 Q23 452 23 449.5 Z" fill="url(#gfold)" stroke="#6f9cc0" stroke-width="1.3"/><path d="M23.5 431 H53" stroke="#a9c9e2" stroke-width="1"/><rect x="96.5" y="426" width="25" height="25.5" rx="2" fill="#5d8aac" stroke="#4f7a9c" stroke-width="1"/><rect x="101" y="427" width="16" height="9" fill="#f4f6f8"/><rect x="101.5" y="443" width="14" height="8.5" fill="#dfe6ec"/><rect x="109" y="444.5" width="3" height="5" fill="#5d8aac"/><ellipse cx="182" cy="454" rx="12" ry="2.2" fill="url(#gshadow)"/><path d="M178.3 423 H197 L188.5 431.5 H198 L171.7 455.2 L176.5 439 H170 Z" fill="url(#gbolt)" stroke="#9c8246" stroke-width="1.4" stroke-linejoin="round"/><ellipse cx="254" cy="454" rx="12" ry="2.2" fill="url(#gshadow)"/><path d="M250.3 423 H269 L260.5 431.5 H270 L243.7 455.2 L248.5 439 H242 Z" fill="url(#gbolt)" stroke="#9c8246" stroke-width="1.4" stroke-linejoin="round"/><path d="M253 435.5 H261 M257 435.5 V452.5 M253 452.5 H261" stroke="#333" stroke-width="4" stroke-linecap="round"/><path d="M253 435.5 H261 M257 435.5 V452.5 M253 452.5 H261" stroke="#e8e8e8" stroke-width="1.6"/><ellipse cx="322" cy="454" rx="12" ry="2.2" fill="url(#gshadow)"/><path d="M318.3 423 H337 L328.5 431.5 H338 L311.7 455.2 L316.5 439 H310 Z" fill="url(#gbolt)" stroke="#9c8246" stroke-width="1.4" stroke-linejoin="round"/><circle cx="327" cy="436.9" r="9.6" fill="#f6f0d8" stroke="#777" stroke-width="2.2"/><circle cx="326.5" cy="432" r="2.8" fill="#8fb2e0"/><circle cx="322" cy="440" r="2.8" fill="#8fb2e0"/><circle cx="331" cy="440" r="2.8" fill="#8fb2e0"/><path d="M337 445.5 L343.5 452" stroke="#444" stroke-width="4.2" stroke-linecap="round"/><path d="M392.5 422.5 H406 L416 432.5 V446 L406 455.8 H392.5 L382.5 446 V432.5 Z" fill="url(#gstop)"/><path d="M391.6 437 V432 M394.9 436 V430 M398.2 436 V430 M401.5 437 V432" stroke="#fff" stroke-width="3" stroke-linecap="round"/><path d="M390.1 435.5 H403 V441 L406.5 437.6 Q408.6 435.8 410 437.6 L403.5 447.5 Q401.5 450.8 397 450.8 Q390.1 450.8 390.1 444 Z" fill="#fff"/><path d="M393.25 432 V437 M396.55 431 V437 M399.85 431 V437" stroke="#f0b0a8" stroke-width="0.5"/><rect x="457.5" y="423.3" width="31" height="31.2" rx="2.5" fill="url(#gbox)" stroke="#999" stroke-width="2"/><circle cx="466.6" cy="434.5" r="7.8" fill="#cc1d1d"/><path d="M463.5 431.4 L469.7 437.6 M469.7 431.4 L463.5 437.6" stroke="#fff" stroke-width="2.3"/><path d="M461 444.5 V450.5 H468 M466 448.5 L468.5 450.5 L466 452.5" fill="none" stroke="#555" stroke-width="1.6"/><path d="M475.3 434 H482.7 L488 439.3 V446.7 L482.7 452 H475.3 L470 446.7 V439.3 Z" fill="#e2481c"/><path d="M475.5 438 V446 Q475.5 449 479 449 Q483 449 484.5 444.5 L482.5 443.5 V438 Z" fill="#fff"/><circle cx="547" cy="438.7" r="16.3" fill="url(#gblue)" stroke="#a9bdd8" stroke-width="1.2"/><path d="M540.5 439.5 L545.3 444.6 L555.5 434.2" fill="none" stroke="#fff" stroke-width="3.8"/><circle cx="619" cy="438.4" r="16.3" fill="url(#gblue)" stroke="#a9bdd8" stroke-width="1.2"/><path d="M612.8 432.2 L625.2 444.6 M625.2 432.2 L612.8 444.6" stroke="#fff" stroke-width="3.8"/><rect x="675" y="423" width="32" height="31.5" rx="3" fill="#e2e2e2" stroke="#888" stroke-width="2"/><path d="M686 426 H697 L692 432 H698 L683 447 L686.5 437 H681 Z" fill="url(#gbolt)" stroke="#9c8246" stroke-width="1"/><circle cx="695.5" cy="444.4" r="7.3" fill="#5f93d8"/><path d="M692 444.5 L694.7 447 L699 442" fill="none" stroke="#fff" stroke-width="1.8"/><circle cx="700.8" cy="428.9" r="2.1" fill="#4cd43a"/><polygon points="1087.00,426.50 1090.88,436.66 1101.74,437.21 1093.28,444.04 1096.11,454.54 1087.00,448.60 1077.89,454.54 1080.72,444.04 1072.26,437.21 1083.12,436.66" fill="url(#gstar)" stroke="#c99a2e" stroke-width="1.1" stroke-linejoin="round"/><path d="M1095 442.5 H1101 V447 H1105.5 V453 H1101 V457.5 H1095 V453 H1090.5 V447 H1095 Z" fill="url(#ggreen)" stroke="#5f9a30" stroke-width="1.8" stroke-linejoin="round"/><ellipse cx="1162" cy="455.5" rx="17" ry="2" fill="url(#gshadow)"/><path d="M1145.7 436.5 Q1155 431 1164.5 428.8 L1173.8 437.7 Q1174 441 1172.9 442.4 Q1167 447 1160.7 450.8 Q1153 443 1145.7 436.5 Z" fill="#e3c17b" stroke="#b8965a" stroke-width="0.9"/><path d="M1150.5 434.3 L1163.5 448.2 M1155.3 432.2 L1166.8 446 M1159.8 430.3 L1170 443.6" stroke="#b89454" stroke-width="1.1"/><path d="M1164.5 429.8 Q1171 433 1173 440" fill="none" stroke="#aaa398" stroke-width="3.6"/><ellipse cx="1172.8" cy="429.8" rx="3.2" ry="3.8" transform="rotate(40 1172.8 429.8)" fill="#9a6820"/><ellipse cx="1236" cy="455" rx="11" ry="1.6" fill="url(#gshadow)"/><circle cx="1229" cy="436.7" r="10.3" fill="#fff" stroke="#7a7a7a" stroke-width="2"/><path d="M1225 442.5 L1229 430 L1233 442.5 M1226.5 438 H1231.5" fill="none" stroke="#aaa" stroke-width="1"/><path d="M1239 445 L1246 452" stroke="#555" stroke-width="4" stroke-linecap="round"/><rect x="1289.4" y="423.2" width="31.2" height="31.6" rx="3" fill="url(#gbox)" stroke="#9a9a9a" stroke-width="2"/><path d="M1304 426.5 H1300 Q1295.8 426.5 1295.8 431.5 Q1295.8 437 1300 437 H1304 Z" fill="#606060"/><rect x="1302.2" y="426.2" width="3.3" height="26" fill="#555"/><rect x="1307" y="426.2" width="3.3" height="26" fill="#555"/><rect x="1302.2" y="426.2" width="8" height="2.5" fill="#555"/><rect x="1361.3" y="423.2" width="31.2" height="31.6" rx="3" fill="url(#gbox)" stroke="#9a9a9a" stroke-width="2"/><rect x="1368" y="432.3" width="12.6" height="2.8" fill="#555"/><path d="M1381 433.7 H1385.5 V443 H1376" fill="none" stroke="#555" stroke-width="2.2"/><path d="M1371.5 443 L1378 438.5 V447.5 Z" fill="#444"/></g><text x="24" y="42" font-size="29" fill="#e0e0e0" font-weight="bold" textLength="160" lengthAdjust="spacingAndGlyphs">Workspaces</text><text x="232" y="42" font-size="29" fill="#e0e0e0" font-weight="bold" textLength="167" lengthAdjust="spacingAndGlyphs">Applications</text><text x="1177" y="42" font-size="29" fill="#e0e0e0" font-weight="bold" textLength="205" lengthAdjust="spacingAndGlyphs">Apr 8  11:29 PM</text><text x="2217" y="42" font-size="29" fill="#e0e0e0" font-weight="bold" textLength="32" lengthAdjust="spacingAndGlyphs">en</text><text x="2472" y="42" font-size="29" fill="#e0e0e0" font-weight="bold" textLength="63" lengthAdjust="spacingAndGlyphs">53 %</text><text x="1168" y="111" font-size="29" fill="#e6e6e6" font-weight="bold" textLength="223" lengthAdjust="spacingAndGlyphs">MySQL Workbench</text><text x="182" y="184" font-size="28.6" fill="#263035" font-weight="bold" textLength="237" lengthAdjust="spacingAndGlyphs">Local instance 3306</text><text x="19" y="248" font-size="27.5" fill="#2c3236" textLength="41" lengthAdjust="spacingAndGlyphs">File</text><text x="93" y="248" font-size="27.5" fill="#2c3236" textLength="47" lengthAdjust="spacingAndGlyphs">Edit</text><text x="171" y="248" font-size="27.5" fill="#2c3236" textLength="57" lengthAdjust="spacingAndGlyphs">View</text><text x="260" y="248" font-size="27.5" fill="#2c3236" textLength="72" lengthAdjust="spacingAndGlyphs">Query</text><text x="365" y="248" font-size="27.5" fill="#2c3236" textLength="110" lengthAdjust="spacingAndGlyphs">Database</text><text x="505" y="248" font-size="27.5" fill="#2c3236" textLength="78" lengthAdjust="spacingAndGlyphs">Server</text><text x="613" y="248" font-size="27.5" fill="#2c3236" textLength="66" lengthAdjust="spacingAndGlyphs">Tools</text><text x="709" y="248" font-size="27.5" fill="#2c3236" textLength="110" lengthAdjust="spacingAndGlyphs">Scripting</text><text x="850" y="248" font-size="27.5" fill="#2c3236" textLength="56" lengthAdjust="spacingAndGlyphs">Help</text><text x="44" y="376" font-size="28.6" fill="#8f9496" font-weight="bold" textLength="90" lengthAdjust="spacingAndGlyphs">Query 1</text><text x="256" y="376" font-size="28.6" fill="#8f9496" font-weight="bold" textLength="116" lengthAdjust="spacingAndGlyphs">SQL File 3</text><text x="493" y="376" font-size="28.6" fill="#263035" font-weight="bold" textLength="79" lengthAdjust="spacingAndGlyphs">sql5.1*</text><text x="754" y="448" font-size="27" fill="#2c3236" textLength="225" lengthAdjust="spacingAndGlyphs">Limit to 1000 rows</text><text x="27" y="1412" font-size="27" fill="#2c3236" textLength="221" lengthAdjust="spacingAndGlyphs">Query interrupted</text></svg></body></html>
